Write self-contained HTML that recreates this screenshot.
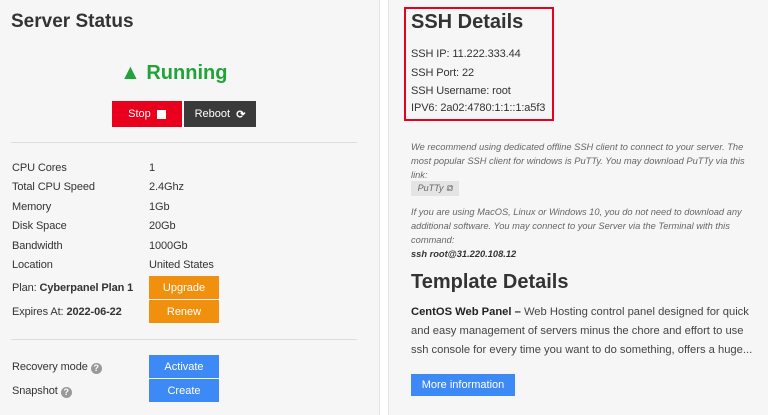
<!DOCTYPE html>
<html><head><style>
*{margin:0;padding:0;box-sizing:border-box}
body{width:768px;height:415px;background:#fff;font-family:"Liberation Sans",sans-serif;color:#333;position:relative;overflow:hidden}
.p{position:absolute}
#L{left:0;top:0;width:380px;height:415px;background:#f6f6f6;border-right:1px solid #e3e3e3}
#R{left:388px;top:0;width:380px;height:415px;background:#f6f6f6;border-left:1px solid #e3e3e3}
.t{font-size:11px;line-height:14px;white-space:nowrap;letter-spacing:-0.1px}
.btn{position:absolute;color:#fff;font-size:11px;text-align:center;display:flex;align-items:center;justify-content:center}
.o{background:#f0900c}.b{background:#3d8af7}
.q{display:inline-block;width:11px;height:11px;border-radius:50%;background:#999;color:#fff;font-size:9px;line-height:11px;text-align:center;font-weight:bold;vertical-align:-1px}
.it{font-size:9.3px;font-style:italic;color:#666;line-height:14px;white-space:nowrap}
</style></head><body>
<div id="L" class="p"></div>
<div id="R" class="p"></div>
<div class="p" style="left:11px;top:11px;font-size:19px;font-weight:bold;color:#333">Server Status</div>
<div class="p" style="left:120px;top:61px;font-size:20px;font-weight:bold;color:#22a33a"><span style="font-size:21px">▲</span>&nbsp;Running</div>
<div class="btn" style="left:112px;top:101px;width:70px;height:26px;background:#e8001c">Stop&nbsp;&nbsp;<span style="display:inline-block;width:9px;height:9px;background:#fff"></span></div>
<div class="btn" style="left:184px;top:101px;width:72px;height:26px;background:#3a3a3a">Reboot&nbsp;&nbsp;<b>⟳</b></div>
<div class="p" style="left:11px;top:142px;width:346px;height:1px;background:#ddd"></div>
<div class="p t" style="left:12px;top:161px">CPU Cores</div><div class="p t" style="left:149px;top:161px">1</div>
<div class="p t" style="left:12px;top:180px">Total CPU Speed</div><div class="p t" style="left:149px;top:180px">2.4Ghz</div>
<div class="p t" style="left:12px;top:200px">Memory</div><div class="p t" style="left:149px;top:200px">1Gb</div>
<div class="p t" style="left:12px;top:219px">Disk Space</div><div class="p t" style="left:149px;top:219px">20Gb</div>
<div class="p t" style="left:12px;top:239px">Bandwidth</div><div class="p t" style="left:149px;top:239px">1000Gb</div>
<div class="p t" style="left:12px;top:258px">Location</div><div class="p t" style="left:149px;top:258px">United States</div>
<div class="p t" style="left:12px;top:281px">Plan: <b>Cyberpanel Plan 1</b></div>
<div class="p t" style="left:12px;top:305px">Expires At: <b>2022-06-22</b></div>
<div class="btn o" style="left:149px;top:276px;width:70px;height:23px">Upgrade</div>
<div class="btn o" style="left:149px;top:300px;width:70px;height:23px">Renew</div>
<div class="p" style="left:11px;top:339px;width:346px;height:1px;background:#ddd"></div>
<div class="p t" style="left:12px;top:360px">Recovery mode <span class="q">?</span></div>
<div class="p t" style="left:12px;top:384px">Snapshot <span class="q">?</span></div>
<div class="btn b" style="left:149px;top:355px;width:70px;height:23px">Activate</div>
<div class="btn b" style="left:149px;top:379px;width:70px;height:23px">Create</div>

<div class="p" style="left:404px;top:7px;width:150px;height:114px;border:2px solid #e8001c"></div>
<div class="p" style="left:411px;top:11px;font-size:20px;font-weight:bold">SSH Details</div>
<div class="p t" style="left:411px;top:47px">SSH IP: 11.222.333.44</div>
<div class="p t" style="left:411px;top:66px">SSH Port: 22</div>
<div class="p t" style="left:411px;top:84px">SSH Username: root</div>
<div class="p t" style="left:411px;top:101px">IPV6: 2a02:4780:1:1::1:a5f3</div>
<div class="p it" style="left:411px;top:140px">We recommend using dedicated offline SSH client to connect to your server. The<br>most popular SSH client for windows is PuTTy. You may download PuTTy via this<br>link:</div>
<div class="p" style="left:411px;top:181px;width:48px;height:15px;background:#e4e4e4;font-size:9px;font-style:italic;color:#666;text-align:center;line-height:15px">PuTTy ⧉</div>
<div class="p it" style="left:411px;top:205px">If you are using MacOS, Linux or Windows 10, you do not need to download any<br>additional software. You may connect to your Server via the Terminal with this<br>command:<br><b style="color:#333">ssh root@31.220.108.12</b></div>
<div class="p" style="left:411px;top:271px;font-size:20px;font-weight:bold">Template Details</div>
<div class="p" style="left:411px;top:303px;font-size:11.2px;line-height:19px;color:#444;white-space:nowrap"><b style="color:#222">CentOS Web Panel –</b> Web Hosting control panel designed for quick<br>and easy management of servers minus the chore and effort to use<br>ssh console for every time you want to do something, offers a huge...</div>
<div class="btn b" style="left:411px;top:374px;width:104px;height:22px;font-size:11px">More information</div>
</body></html>
